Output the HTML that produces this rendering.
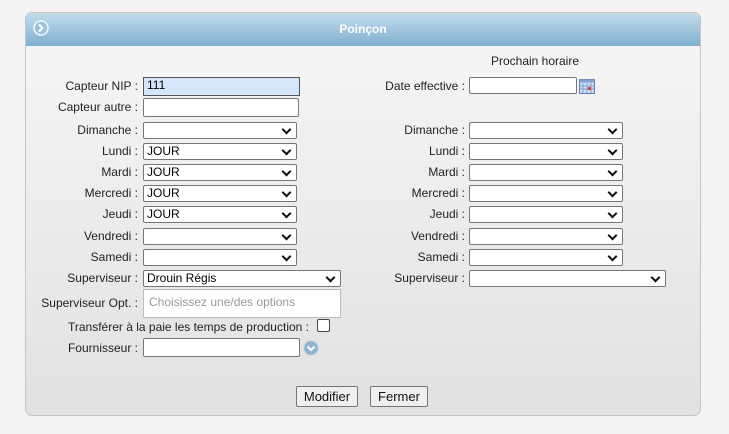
<!DOCTYPE html>
<html><head><meta charset="utf-8"><style>
*{box-sizing:border-box;margin:0;padding:0}
body{width:729px;height:434px;background:#f4f4f4;font-family:"Liberation Sans",sans-serif;font-size:12px;color:#222;position:relative;overflow:hidden}
.panel{position:absolute;left:25px;top:12px;width:676px;height:404px;border:1px solid #c4c4c4;border-radius:7px;background:linear-gradient(#f7f7f7,#e1e1e1);overflow:hidden}
.hdr{position:absolute;left:0;top:0;width:100%;height:33px;background:linear-gradient(#c5dded,#7eafce);color:#fff;font-weight:bold;text-align:center;line-height:33px;font-size:12px}
.l{position:absolute;text-align:right;white-space:nowrap;line-height:14px}
.b{position:absolute;background:#fff;border:1px solid #767676;border-radius:2px;height:17px;padding-left:3px;line-height:15px;font-size:12px;color:#000}
.s::after{content:"";position:absolute;right:6px;top:3px;width:5px;height:5px;border-right:2px solid #111;border-bottom:2px solid #111;transform:rotate(45deg)}
.btn{position:absolute;top:386px;height:21px;border:1px solid #767676;border-radius:2px;background:#efefef;line-height:19px;text-align:center;font-size:13px;color:#111}
</style></head><body>
<div class="panel"><div class="hdr">Poinçon</div>
<svg style="position:absolute;left:7px;top:7px" width="16" height="16"><circle cx="8" cy="8" r="7" fill="#9cc3dc" stroke="#fff" stroke-width="1.3"/><path d="M6 4.5L9.5 8L6 11.5" stroke="#fff" stroke-width="2" fill="none"/></svg>
</div>
<div class="l" style="left:480px;top:54px;width:110px;text-align:center">Prochain horaire</div>

<div class="l" style="right:591px;top:79px">Capteur NIP :</div>
<div class="b" style="left:143px;top:77px;width:157px;height:19px;background:#d6e6fa;border-color:#555;border-radius:0">111</div>
<div class="l" style="right:591px;top:100px">Capteur autre :</div>
<div class="b" style="left:143px;top:98px;width:156px;height:19px"></div>

<div class="l" style="right:264px;top:79px">Date effective :</div>
<div class="b" style="left:469px;top:77px;width:108px"></div>
<svg style="position:absolute;left:579px;top:78px" width="16" height="16"><rect x="0.5" y="1.5" width="15" height="14" fill="#cfe0f4" stroke="#5b7fb5"/><rect x="0.5" y="1.5" width="15" height="3" fill="#7f9fd0"/><path d="M4 5v10M8 5v10M12 5v10M1 8h14M1 11h14" stroke="#7f9fd0" stroke-width="1"/><rect x="9" y="9" width="3" height="3" fill="#e04040"/></svg>

<div class="l" style="right:591px;top:123px">Dimanche :</div><div class="b s" style="left:143px;top:122px;width:154px"></div>
<div class="l" style="right:591px;top:144px">Lundi :</div><div class="b s" style="left:143px;top:143px;width:154px">JOUR</div>
<div class="l" style="right:591px;top:165px">Mardi :</div><div class="b s" style="left:143px;top:164px;width:154px">JOUR</div>
<div class="l" style="right:591px;top:186px">Mercredi :</div><div class="b s" style="left:143px;top:185px;width:154px">JOUR</div>
<div class="l" style="right:591px;top:207px">Jeudi :</div><div class="b s" style="left:143px;top:206px;width:154px">JOUR</div>
<div class="l" style="right:591px;top:229px">Vendredi :</div><div class="b s" style="left:143px;top:228px;width:154px"></div>
<div class="l" style="right:591px;top:250px">Samedi :</div><div class="b s" style="left:143px;top:249px;width:154px"></div>
<div class="l" style="right:591px;top:271px">Superviseur :</div><div class="b s" style="left:143px;top:270px;width:198px">Drouin Régis</div>

<div class="l" style="right:264px;top:123px">Dimanche :</div><div class="b s" style="left:469px;top:122px;width:154px"></div>
<div class="l" style="right:264px;top:144px">Lundi :</div><div class="b s" style="left:469px;top:143px;width:154px"></div>
<div class="l" style="right:264px;top:165px">Mardi :</div><div class="b s" style="left:469px;top:164px;width:154px"></div>
<div class="l" style="right:264px;top:186px">Mercredi :</div><div class="b s" style="left:469px;top:185px;width:154px"></div>
<div class="l" style="right:264px;top:207px">Jeudi :</div><div class="b s" style="left:469px;top:206px;width:154px"></div>
<div class="l" style="right:264px;top:229px">Vendredi :</div><div class="b s" style="left:469px;top:228px;width:154px"></div>
<div class="l" style="right:264px;top:250px">Samedi :</div><div class="b s" style="left:469px;top:249px;width:154px"></div>
<div class="l" style="right:264px;top:271px">Superviseur :</div><div class="b s" style="left:469px;top:270px;width:197px"></div>

<div class="l" style="right:591px;top:296px">Superviseur Opt. :</div>
<div class="b" style="left:143px;top:289px;width:198px;height:29px;border-color:#bbb;border-radius:0;color:#999;line-height:25px;padding-left:5px">Choisissez une/des options</div>
<div class="l" style="right:420px;top:320px">Transférer à la paie les temps de production :</div>
<div style="position:absolute;left:317px;top:319px;width:13px;height:13px;border:1px solid #444;border-radius:2px;background:#fff"></div>
<div class="l" style="right:591px;top:341px">Fournisseur :</div>
<div class="b" style="left:143px;top:338px;width:157px;height:19px"></div>
<svg style="position:absolute;left:303px;top:340px" width="16" height="16"><circle cx="8" cy="8" r="7.3" fill="#8eb3cf" stroke="#c6d9e8" stroke-width="1.2"/><path d="M4.5 6.5L8 10L11.5 6.5" stroke="#fff" stroke-width="2" fill="none"/></svg>

<div class="btn" style="left:296px;width:62px">Modifier</div>
<div class="btn" style="left:370px;width:58px">Fermer</div>
</body></html>
